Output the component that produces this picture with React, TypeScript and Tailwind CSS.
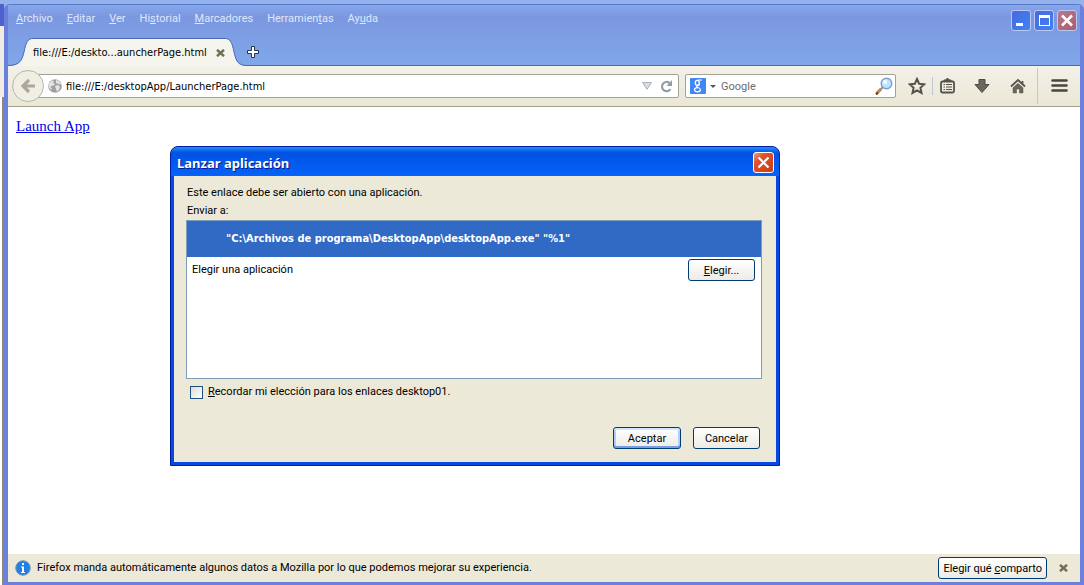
import React, { useState } from 'react';

const menus: [string, string, string][] = [
  ['', 'A', 'rchivo'],
  ['', 'E', 'ditar'],
  ['', 'V', 'er'],
  ['Hi', 's', 'torial'],
  ['', 'M', 'arcadores'],
  ['Herramien', 't', 'as'],
  ['Ay', 'u', 'da'],
];

const xpButton =
  'flex items-center justify-center rounded-[3px] border border-[#003c74] bg-linear-to-b from-white to-[#ecebe5] pt-px text-black whitespace-nowrap';

const WindowButton: React.FC<{ label: string; className: string; children: React.ReactNode }> = ({ label, className, children }) => (
  <button aria-label={label} className={`h-[21px] w-5 shrink-0 rounded-[3px] border border-[#b9c8f5] ${className}`}>
    <svg viewBox="0 0 18 19" className="h-full w-full" shapeRendering="crispEdges">
      {children}
    </svg>
  </button>
);

const CrossIcon: React.FC = () => (
  <svg width="9" height="8" viewBox="0 0 9 8">
    <path d="M1 .8 8 7.2M8 .8 1 7.2" stroke="#756f56" strokeWidth="2.5" />
  </svg>
);

const TitleBar: React.FC = () => (
  <header className="bg-linear-to-b from-[#86a7ec] via-[#7b97e0] via-20% to-[#80a8ea]">
    <div className="flex h-[33px] items-start justify-between">
      <nav className="flex h-7 items-center gap-[14px] pl-2 text-[#dfe8fb]">
        {menus.map(([before, key, after]) => (
          <button key={before + key + after}>
            {before}
            <u>{key}</u>
            {after}
          </button>
        ))}
      </nav>
      <div className="flex gap-[3px] pt-[5px] pr-[3px]">
        <WindowButton label="Minimizar" className="bg-linear-to-br from-[#4868dc] to-[#3f83f5]">
          <path d="M4 12h7v3H4z" fill="#fff" />
        </WindowButton>
        <WindowButton label="Maximizar" className="bg-linear-to-br from-[#4868dc] to-[#3f83f5]">
          <path d="M4 4h11v11H4zM5 7v7h9V7z" fill="#fff" fillRule="evenodd" />
        </WindowButton>
        <WindowButton label="Cerrar" className="bg-linear-to-br from-[#b5798f] to-[#b05c6c]">
          <path d="M4 4.5 14 14.5M14 4.5 4 14.5" stroke="#fff" strokeWidth="2.5" shapeRendering="auto" />
        </WindowButton>
      </div>
    </div>
    <div className="flex h-7">
      <svg width="25" height="28" viewBox="0 0 25 28">
        <path d="M0 28C11 28 14 23 16 14C18 4 20 .5 25 .5V28Z" fill="#f5f4ed" />
        <path d="M0 27.5C11 27.5 14 23 16 14C18 4 20 .5 25 .5" fill="none" stroke="#4a68b8" />
      </svg>
      <div className="flex h-7 w-48 items-center justify-between border-t border-[#4a68b8] bg-[#f5f4ed]">
        <span className="font-['DejaVu_Sans_Condensed',sans-serif]">file:///E:/deskto...auncherPage.html</span>
        <button aria-label="Cerrar pestaña">
          <CrossIcon />
        </button>
      </div>
      <svg width="22" height="28" viewBox="0 0 22 28">
        <path d="M22 28C13 28 11 23 9 14C7 4 5 .5 0 .5V28Z" fill="#f5f4ed" />
        <path d="M22 27.5C13 27.5 11 23 9 14C7 4 5 .5 0 .5" fill="none" stroke="#4a68b8" />
      </svg>
      <div className="flex flex-1 items-center border-b border-[#4a68b8]">
        <button aria-label="Nueva pestaña">
          <svg width="12" height="12" viewBox="0 0 12 12">
            <path d="M4.5 .5h3v4h4v3h-4v4h-3v-4h-4v-3h4z" fill="#fff" stroke="#26354f" />
          </svg>
        </button>
      </div>
    </div>
  </header>
);

const AddressBar: React.FC = () => {
  const [url, setUrl] = useState('file:///E:/desktopApp/LauncherPage.html');
  return (
    <div className="flex min-w-0 flex-1 items-center">
      <button aria-label="Atrás" className="z-10 flex size-8 shrink-0 items-center justify-center rounded-full border border-[#b4b7b3] bg-[#f1efe4]">
        <svg width="16" height="16" viewBox="0 0 16 16">
          <path d="M9 2 3 8l6 6M3.5 8H15" fill="none" stroke="#aaa89f" strokeWidth="3.2" />
        </svg>
      </button>
      <div className="-ml-4 flex h-6 min-w-0 flex-1 items-center rounded-[2px] border border-[#a4a197] bg-white pr-[5px] pl-[19px]">
        <svg width="14" height="14" viewBox="0 0 14 14" className="shrink-0">
          <circle cx="7" cy="7" r="6.8" fill="#a0a0a0" />
          <path d="M1 4.5 4 1.5 6 2 5 4 7 5 5 7 3.5 6.5 2.5 8 4 9.5 3 11 .8 8zM8 1l3 1 2 3-2 .5L9.5 4 8 4.5zM7 7l3-1 2 2-1 3-2 1.5L8 10z" fill="#e4e4e4" />
        </svg>
        <input
          aria-label="Dirección"
          value={url}
          onChange={(e) => setUrl(e.target.value)}
          className="ml-1 min-w-0 flex-1 pt-px font-['DejaVu_Sans_Condensed',sans-serif] outline-none"
        />
        <button aria-label="Historial de direcciones">
          <svg width="10" height="8" viewBox="0 0 10 8">
            <path d="M.5.5h9L5 7.3z" fill="#d8dde2" stroke="#a9b0b8" />
          </svg>
        </button>
        <button aria-label="Recargar" className="ml-2">
          <svg width="13" height="13" viewBox="0 0 13 13">
            <path d="M10.5 9A4.6 4.6 0 1 1 9.5 3" fill="none" stroke="#929da8" strokeWidth="2.2" />
            <path d="M12 0v6H6.5z" fill="#929da8" />
          </svg>
        </button>
      </div>
    </div>
  );
};

const SearchBar: React.FC = () => {
  const [query, setQuery] = useState('');
  return (
    <div className="flex h-6 w-[211px] items-center rounded-[2px] border border-[#a4a197] bg-white pr-[2px] pl-1">
      <button aria-label="Motor de búsqueda" className="flex shrink-0 items-center gap-1">
        <svg width="16" height="16" viewBox="0 0 16 16">
          <rect width="16" height="16" rx="1" fill="#4285f4" />
          <g fill="none" stroke="#fff">
            <ellipse cx="7.3" cy="4.8" rx="2" ry="2.5" strokeWidth="1.3" />
            <path d="M7.5 2H12M9.3 6.3C10 7.2 6.5 7.5 6.5 8.5S10.5 9.5 10.5 11.5" strokeWidth="1.2" />
            <path d="M10.5 11.5C10.5 14.5 4.5 14.5 4.5 11.8C4.5 10.3 6 9.7 8 9.7" strokeWidth="1.3" />
          </g>
        </svg>
        <svg width="6" height="3" viewBox="0 0 6 3">
          <path d="M0 0h6L3 3z" fill="#555" />
        </svg>
      </button>
      <input aria-label="Buscar" placeholder="Google" value={query} onChange={(e) => setQuery(e.target.value)} className="ml-[5px] min-w-0 flex-1 pt-[2px] outline-none placeholder:text-[#6d6d6d]" />
      <button aria-label="Iniciar búsqueda">
        <svg width="18" height="18" viewBox="0 0 18 18">
          <path d="M8 10 4.5 13.5" stroke="#8296ae" strokeWidth="2" />
          <path d="M6 12 1.5 16.5" stroke="#d77f3b" strokeWidth="3" />
          <path d="M3 15.5 1 17.5" stroke="#5c4037" strokeWidth="2" />
          <circle cx="11.5" cy="6.5" r="5.3" fill="#bfe3fb" stroke="#7c9fd0" strokeWidth="1.4" />
          <circle cx="10" cy="5" r="2.2" fill="#eefaff" />
        </svg>
      </button>
    </div>
  );
};

const Toolbar: React.FC = () => (
  <div className="flex h-[41px] items-center border-b border-[#a3a08e] bg-linear-to-b from-[#f3f1e9] to-[#eae7d6] pl-1">
    <AddressBar />
    <div className="ml-[6px]">
      <SearchBar />
    </div>
    <button aria-label="Añadir a marcadores" className="ml-3">
      <svg width="18" height="18" viewBox="0 0 18 18">
        <path d="m9 2 2.1 4.7 5.2.6-3.9 3.5 1.1 5.1L9 13.3l-4.5 2.6 1.1-5.1L1.7 7.3l5.2-.6z" fill="none" stroke="#56544a" strokeWidth="2" />
      </svg>
    </button>
    <div className="ml-[6px] h-[18px] w-px bg-[#c4c8cc]" />
    <button aria-label="Marcadores" className="ml-[7px]">
      <svg width="15" height="16" viewBox="0 0 15 16">
        <rect x="1" y="3.5" width="13" height="11" rx="1.5" fill="none" stroke="#56544a" strokeWidth="1.8" />
        <path d="M4 3.5V2h2c0-2 3-2 3 0h2v1.5z" fill="#56544a" stroke="#56544a" />
        <path d="M3.5 6.5H5M6 6.5h6M3.5 9H5M6 9h6M3.5 11.5H5M6 11.5h6" stroke="#56544a" strokeWidth="1.1" />
      </svg>
    </button>
    <button aria-label="Descargas" className="ml-[19px]">
      <svg width="16" height="16" viewBox="0 0 16 16">
        <path d="M5 1.5h6v5h4L8 14.5 1 6.5h4z" fill="#6a675b" stroke="#4c4a41" strokeLinejoin="round" />
      </svg>
    </button>
    <button aria-label="Inicio" className="ml-5">
      <svg width="16" height="16" viewBox="0 0 16 16">
        <path d="M1 8.5 8 2l7 6.5M12.5 3v3" fill="none" stroke="#56544a" strokeWidth="1.8" />
        <path d="M3 9.8 8 5.3l5 4.5V15H9.5v-4h-3v4H3z" fill="#6a675b" stroke="#56544a" strokeWidth=".5" />
      </svg>
    </button>
    <div className="ml-[11px] h-9 w-px bg-[#c4c8cc]" />
    <button aria-label="Abrir menú" className="mr-3 ml-[13px]">
      <svg width="17" height="14" viewBox="0 0 17 14">
        <path d="M1.5 1.5h14M1.5 6.5h14M1.5 11.5h14" stroke="#48463e" strokeWidth="2.6" strokeLinecap="round" />
      </svg>
    </button>
  </div>
);

const LaunchDialog: React.FC = () => {
  const [remember, setRemember] = useState(false);
  return (
    <div
      role="dialog"
      aria-labelledby="dialog-title"
      className="absolute top-[146px] left-[170px] w-[610px] rounded-t-lg border border-[#001ea0] bg-[#0747e2] px-[3px] pb-[3px]"
    >
      <div className="-mx-[3px] flex h-[29px] items-center justify-between rounded-t-[7px] bg-linear-to-b from-[#2a8afc] via-[#0252e2] via-20% to-[#0562fb] pt-[2px] pr-[5px] pl-[6px]">
        <h1 id="dialog-title" className="font-['Noto_Sans',sans-serif] text-[13px] leading-4 font-bold text-white [text-shadow:1px_1px_#0a1883]">
          Lanzar aplicación
        </h1>
        <button aria-label="Cerrar" className="size-[21px] rounded-[3px] border border-white bg-linear-to-br from-[#f09a80] via-[#e2502c] via-30% to-[#c93d13]">
          <svg viewBox="0 0 19 19" className="h-full w-full">
            <path d="M4.5 4.5 14.5 14.5M14.5 4.5 4.5 14.5" stroke="#fff" strokeWidth="2.2" />
          </svg>
        </button>
      </div>
      <div className="bg-[#ece9d8] px-3 pt-2 pb-[13px]">
        <p className="h-[18px] pl-[1px] leading-[18px]">Este enlace debe ser abierto con una aplicación.</p>
        <p className="h-[18px] pl-[1px] leading-[18px]">Enviar a:</p>
        <div className="mr-[2px] h-[159px] border border-[#7f9db9] bg-white">
          <div className="flex h-9 items-center bg-[#316ac5] pl-[39px] font-['DejaVu_Sans_Condensed',sans-serif] font-bold text-white">
            "C:\Archivos de programa\DesktopApp\desktopApp.exe" "%1"
          </div>
          <div className="flex items-center justify-between px-[6px] pt-[2px] pl-[5px]">
            <span className="leading-[18px]">Elegir una aplicación</span>
            <button className={`${xpButton} h-[22px] w-[67px]`}>
              <span>
                <u>E</u>legir...
              </span>
            </button>
          </div>
        </div>
        <label className="mt-[5px] ml-1 flex w-fit items-center gap-[5px]">
          <input
            type="checkbox"
            checked={remember}
            onChange={() => setRemember(!remember)}
            className="size-[13px] appearance-none border border-[#1c5180] bg-linear-to-br from-[#dcdcd7] to-white checked:bg-[#21a121]"
          />
          <span>
            <u>R</u>ecordar mi elección para los enlaces desktop01.
          </span>
        </label>
        <div className="mt-[27px] mr-1 flex justify-end gap-3">
          <button className={`${xpButton} h-[22px] w-[68px] shadow-[inset_0_2px_#cee7ff,inset_0_-2px_#7c9ce2,inset_2px_0_#b5cdf5,inset_-2px_0_#b5cdf5]`}>Aceptar</button>
          <button className={`${xpButton} h-[22px] w-[67px]`}>Cancelar</button>
        </div>
      </div>
    </div>
  );
};

const NotificationBar: React.FC = () => (
  <footer className="flex h-[28px] items-center bg-[#ece9d8] pr-3 pl-[7px]">
    <svg width="16" height="16" viewBox="0 0 16 16" className="shrink-0">
      <circle cx="8" cy="8" r="7.3" fill="#2080e4" stroke="#7897b8" />
      <path d="M7 3h2v2H7zM6 6.5h3V12h1v1H6v-1h1V7.5H6z" fill="#fff" />
    </svg>
    <p className="ml-[6px] flex-1">Firefox manda automáticamente algunos datos a Mozilla por lo que podemos mejorar su experiencia.</p>
    <button className={`${xpButton} h-[22px] px-1`}>
      <span>
        Elegir qué <u>c</u>omparto
      </span>
    </button>
    <button aria-label="Cerrar notificación" className="ml-3">
      <CrossIcon />
    </button>
  </footer>
);

const App: React.FC = () => (
  <div className="relative flex min-h-screen bg-[#93b1ea] pt-1 font-['Roboto','Noto_Sans',sans-serif] text-[11px] leading-4 text-black">
    {/* Edge of the window behind */}
    <div className="flex w-1 flex-col">
      <div className="h-[22px] bg-[#4c62cf]" />
      <div className="h-[71px] bg-[#f0eee4]" />
      <div className="flex-1 border-l-2 border-white bg-[#8b8879]" />
    </div>
    <div className="flex flex-1 flex-col rounded-t-md border-x-4 border-t border-b-[3px] border-[#6b7fdc] border-t-[#5878c8] bg-[#7b97e0]">
      <TitleBar />
      <Toolbar />
      <main className="flex-1 bg-white px-2 pt-[7px]">
        <a href="#launch" className="font-['Liberation_Serif',serif] text-[15px] leading-6 text-[#0000ee] underline">
          Launch App
        </a>
      </main>
      <NotificationBar />
    </div>
    <LaunchDialog />
  </div>
);

export default App;
